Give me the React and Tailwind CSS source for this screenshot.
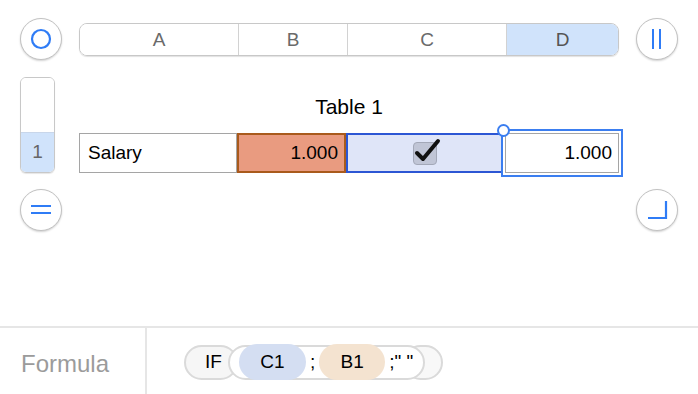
import React from 'react';

const BLUE = '#2f7cf6';

const CircleBtn = ({ children }) => (
    <div className="w-[42px] h-[42px] shrink-0 rounded-full border border-[#c2c2c2] bg-white shadow-[0_1px_2px_rgba(0,0,0,0.18)] flex items-center justify-center">
        {children}
    </div>
);

const Icon = ({ children }) => (
    <svg width="40" height="40" viewBox="0 0 40 40" fill="none" stroke={BLUE} strokeWidth="2.2">
        {children}
    </svg>
);

const App = () => {
    const cols = [
        { label: 'A', w: 'w-[158px]' },
        { label: 'B', w: 'w-[109px]' },
        { label: 'C', w: 'w-[159px]' },
        { label: 'D', w: 'flex-1', active: true },
    ];

    return (
        <div className="w-[698px] h-[394px] bg-white flex flex-col overflow-hidden font-['Liberation_Sans',Arial,sans-serif]">
            {/* Sheet area */}
            <div className="h-[328px] shrink-0 border-b-2 border-[#e6e6e6] px-[20px] pt-[18px] flex flex-col">
                {/* Column headers */}
                <div className="flex items-center h-[42px]">
                    <CircleBtn>
                        <Icon><circle cx="20" cy="20" r="9" /></Icon>
                    </CircleBtn>
                    <div className="mx-[17px] w-[540px] h-[33px] flex rounded-lg border border-[#c8c8c8] shadow-[0_1px_1px_rgba(0,0,0,0.12)] overflow-hidden">
                        {cols.map((c, i) => (
                            <div
                                key={c.label}
                                className={`${c.w} h-full flex items-center justify-center pt-[2px] text-[19px] ${i > 0 ? 'border-l border-[#d2d2d2]' : ''} ${c.active ? 'bg-[#d0e3fb] text-[#555]' : 'bg-white text-[#6a6a6a]'}`}
                            >
                                {c.label}
                            </div>
                        ))}
                    </div>
                    <CircleBtn>
                        <Icon>
                            <path d="M16 10 V30 M23 10 V30" strokeWidth="2" />
                        </Icon>
                    </CircleBtn>
                </div>

                {/* Table */}
                <div className="flex mt-[17px]">
                    <div className="w-[35px] h-[96px] shrink-0 rounded-md border border-[#c8c8c8] overflow-hidden flex flex-col shadow-[0_1px_1px_rgba(0,0,0,0.1)]">
                        <div className="flex-1 bg-white" />
                        <div className="h-[40px] bg-[#d0e3fb] border-t border-[#c8d6ea] flex items-center justify-center text-[19px] text-[#666]">1</div>
                    </div>
                    <div className="ml-[24px] w-[540px] flex flex-col">
                        <div className="h-[56px] flex items-center justify-center pt-[3px] text-[21px] text-black">Table 1</div>
                        <div className="flex h-[40px] text-[19px] text-black">
                            <div className="w-[158px] h-full border border-[#a5a5a5] bg-white flex items-center px-2">Salary</div>
                            <div className="w-[109px] h-full border-2 border-[#a95a1c] bg-[#e99b80] flex items-center justify-end pr-[6px]">1.000</div>
                            <div className="w-[157px] h-full border-2 border-[#2c56d4] bg-[#dfe5f8] flex items-center justify-center">
                                <div className="relative w-[24px] h-[23px] rounded-[4px] bg-[#c0c5d6] border border-[#a3a8b8]">
                                    <svg className="absolute -left-[2px] -top-[5px]" width="30" height="28" viewBox="0 0 30 28" fill="none">
                                        <path d="M5 15 L11 21 L26 3" stroke="#111" strokeWidth="4" strokeLinecap="round" strokeLinejoin="round" />
                                    </svg>
                                </div>
                            </div>
                            <div className="relative ml-[2px] w-[114px] h-full border border-[#a5a5a5] bg-white flex items-center justify-end pr-[6px]">
                                1.000
                                <div className="absolute -inset-[5px] border-2 border-[#3b7ef0] pointer-events-none" />
                                <div className="absolute -left-[9px] -top-[10px] w-[13px] h-[13px] rounded-full bg-white border-2 border-[#3b7ef0]" />
                            </div>
                        </div>
                    </div>
                </div>

                {/* Row controls */}
                <div className="flex justify-between mt-[16px]">
                    <CircleBtn>
                        <Icon><path d="M10 16 H30 M10 23 H30" /></Icon>
                    </CircleBtn>
                    <CircleBtn>
                        <Icon><path d="M11 28 H29 V11" /></Icon>
                    </CircleBtn>
                </div>
            </div>

            {/* Formula bar */}
            <div className="flex-1 flex">
                <div className="w-[147px] shrink-0 border-r-2 border-[#e6e6e6] flex items-center pl-[21px] pt-[6px] text-[24px] text-[#9b9b9b]">
                    Formula
                </div>
                <div className="flex items-center pl-[37px] pt-[2px] text-[19px] text-black">
                    <div className="h-[35px] pl-[19px] pr-[14px] flex items-center rounded-full border-2 border-[#dadada] bg-[#f6f6f6]">IF</div>
                    <div className="relative z-10 -ml-[10px] h-[35px] flex items-center rounded-full border-2 border-[#dadada] bg-white pl-[9px] pr-[10px]">
                        <div className="h-[36px] w-[67px] rounded-full bg-[#d4def2] flex items-center justify-center">C1</div>
                        <span className="mx-[4px]">;</span>
                        <div className="h-[36px] w-[66px] rounded-full bg-[#f4e3d0] flex items-center justify-center">B1</div>
                        <span className="ml-[4px]">;" "</span>
                    </div>
                    <div className="-ml-[22px] w-[40px] h-[35px] rounded-full border-2 border-[#dadada] bg-[#f8f8f8]" />
                </div>
            </div>
        </div>
    );
};

export default App;
